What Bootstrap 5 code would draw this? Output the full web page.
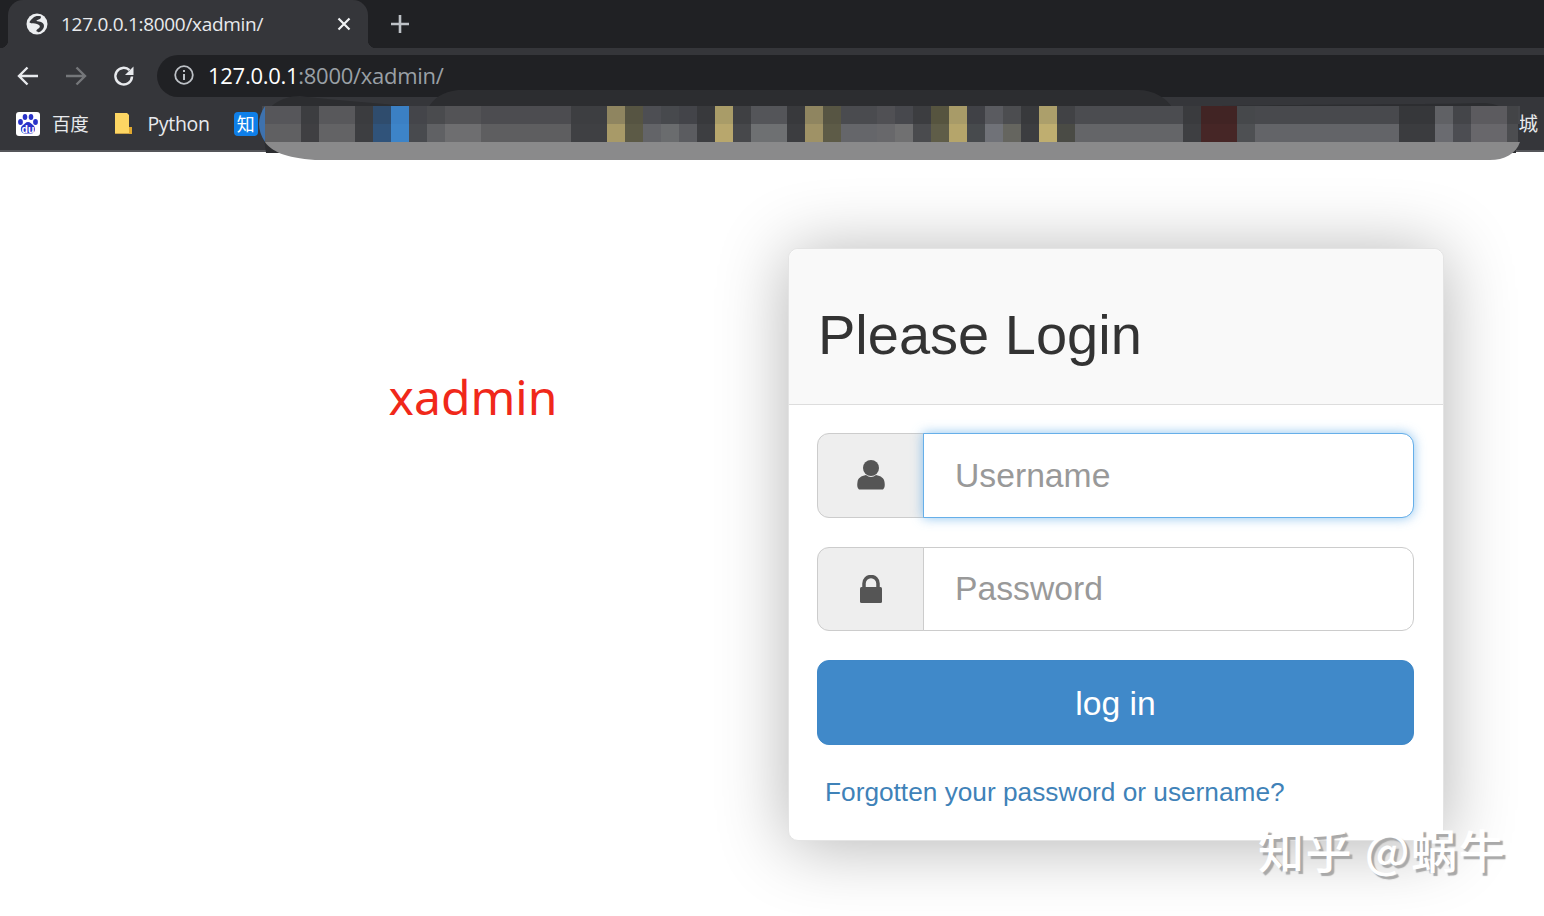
<!DOCTYPE html>
<html lang="en">
<head>
<meta charset="utf-8">
<title>127.0.0.1:8000/xadmin/</title>
<link href="https://cdn.jsdelivr.net/npm/bootstrap@5.3.0/dist/css/bootstrap.min.css" rel="stylesheet">
<style>
html,body{height:100%;overflow:hidden;background:#fff}
body{font-family:"Liberation Sans",Arial,sans-serif;color:#333;position:relative}
.chrome-ui{font-family:"Open Sans","Noto Sans CJK SC",sans-serif;color:#e8eaed}
.tabstrip{height:48px;background:#202124;padding-left:8px;gap:22px}
.tabshape{width:360px;height:48px;background:#35363a;border-radius:15px 15px 0 0;padding:0 17px 0 18px;position:relative;font-size:19px}
.tabshape::before,.tabshape::after{content:"";position:absolute;bottom:0;width:8px;height:8px}
.tabshape::before{left:-8px;background:radial-gradient(circle at 0 0,transparent 8px,#35363a 8.5px)}
.tabshape::after{right:-8px;background:radial-gradient(circle at 100% 0,transparent 8px,#35363a 8.5px)}
.tabtitle{margin-left:13px;letter-spacing:-.3px}
.toolbar{height:49px;background:#35363a;padding:7px 0 0 16px}
.navicons{gap:24px;width:141px;height:42px}
.omnibox{height:42px;background:#202124;border-radius:21px 0 0 21px;padding:0 0 2px 17px;font-size:22px}
.hosttext{color:#fff;margin-left:14px;letter-spacing:-.28px}
.pathtext{color:#9aa0a6;letter-spacing:-.28px}
.bookmarks{height:55px;background:#35363a;border-bottom:2px solid #55565a;padding:0 6px 0 16px;font-size:19.5px}
.markname{margin-left:12px;margin-right:25px;letter-spacing:-.3px}
.zhname{font-size:18.5px;margin-right:26px}
.pyname{margin-left:14px;margin-right:24px}
.zhmark{width:24px;height:24px;background:#0f7fe8;border-radius:4px;font-size:18px;color:#fff;line-height:24px;text-align:center}
.mosaic{position:absolute;left:0;top:0;pointer-events:none}
.stage{height:764px;padding-top:96px}
.brandcol{width:788px;padding:104px 0 0 158px;text-align:center}
.brandname{font-family:"Noto Sans",sans-serif;font-size:48px;line-height:90px;color:#f0281a}
.logincard{width:656px;height:593px;border-color:#e4e4e4;border-radius:10px;box-shadow:0 4px 70px rgba(0,0,0,.3)}
.logincard .card-header{height:156px;background:#f9f9f9;border-color:#ddd;padding:54px 29px 0;border-radius:10px 10px 0 0}
.logintitle{font-size:56px;line-height:64px;margin:0;font-weight:400;color:#333}
.logincard .card-body{padding:28px 29px 0 28px}
.fieldgroup{height:84.5px;margin-bottom:29px}
.fieldgroup .input-group-text{width:107px;justify-content:center;background:#eee;border-color:#ccc;border-radius:12px 0 0 12px;padding:0}
.fieldgroup .form-control{font-size:33.7px;padding:0 31px;border-color:#ccc;border-radius:0 12px 12px 0}
.fieldgroup .form-control::placeholder{color:#999;opacity:1}
.fieldgroup .activefield{border-color:#66afe9;box-shadow:0 0 12px rgba(102,175,233,.75);position:relative;z-index:3}
.loginbtn{height:85px;font-size:33.7px;background:#4089c9;border-color:#3f88c8;border-radius:12px;color:#fff;padding-top:8px}
.forgot{display:block;margin:30px 0 0 8px;font-size:26.25px;line-height:34px;color:#3f82b8;text-decoration:none}
.watermark{position:absolute;left:1258px;top:818px;font-family:"Noto Sans CJK SC",sans-serif;font-size:46px;font-weight:500;line-height:60px;color:#fff;letter-spacing:1.500px;text-shadow:3px 3px 1px #a9a9a9;white-space:nowrap}
</style>
</head>
<body>
<div class="chrome-ui">
  <div class="tabstrip d-flex align-items-center">
    <div class="tabshape d-flex align-items-center">
      <svg width="22" height="22" viewBox="0 0 22 22"><circle cx="11" cy="11" r="10.500" fill="#eceef0"/><path d="M15 3.500c-3-1-6-.5-8 1.500S3.500 8 3.500 9.500c2 1.500 5 .5 7.500 1.500s3.500 2 2.500 3.500-3.500 2-3 3.500 2.500 1.500 4 .5 3.500-3 3.500-5.500-2-4-5-4.500-3-.5-1.500-1.500 3.500-1 3.500-3z" fill="#35363a"/></svg>
      <span class="tabtitle">127.0.0.1:8000/xadmin/</span>
      <svg class="ms-auto" width="14" height="14" viewBox="0 0 14 14"><path d="M1.500 1.500l11 11m0-11l-11 11" stroke="#f1f3f4" stroke-width="2.200"/></svg>
    </div>
    <svg width="20" height="20" viewBox="0 0 20 20"><path d="M10 1v18M1 10h18" stroke="#bdc1c6" stroke-width="2.600"/></svg>
  </div>
  <div class="toolbar d-flex">
    <div class="navicons d-flex align-items-center">
      <svg width="24" height="22" viewBox="0 0 24 22"><path d="M22 11H3m8.500-8.500L3 11l8.500 8.500" fill="none" stroke="#e8eaed" stroke-width="2.400"/></svg>
      <svg width="24" height="22" viewBox="0 0 24 22"><path d="M2 11h19m-8.500-8.500L21 11l-8.500 8.500" fill="none" stroke="#75777a" stroke-width="2.400"/></svg>
      <svg width="24" height="24" viewBox="0 0 24 24"><path d="M20 12.500a8.300 8.300 0 1 1-2.500-6.300" fill="none" stroke="#e8eaed" stroke-width="2.500"/><path d="M21.500 2.500v8.500h-8.500z" fill="#e8eaed"/></svg>
    </div>
    <div class="omnibox flex-grow-1 d-flex align-items-center">
      <svg width="20" height="20" viewBox="0 0 20 20"><circle cx="10" cy="10" r="8.800" fill="none" stroke="#bdc1c6" stroke-width="1.800"/><path d="M9 9h2v6H9zM9 5h2v2H9z" fill="#bdc1c6"/></svg>
      <span class="hosttext">127.0.0.1</span><span class="pathtext">:8000/xadmin/</span>
    </div>
  </div>
  <div class="bookmarks d-flex align-items-center">
    <svg width="24" height="24" viewBox="0 0 24 24"><rect width="24" height="24" rx="3" fill="#fff"/><g fill="#2932c8"><ellipse cx="4.500" cy="10" rx="2.400" ry="3"/><ellipse cx="9" cy="5" rx="2.300" ry="3"/><ellipse cx="15" cy="5" rx="2.300" ry="3"/><ellipse cx="19.500" cy="10" rx="2.400" ry="3"/><path d="M12 10c2.500 0 3.500 2 5.500 3.500s2.500 8-2.500 8H9c-5 0-5-6.500-2.500-8S9.500 10 12 10z"/></g><text x="12" y="20.500" text-anchor="middle" font-size="10.500" font-family="Liberation Sans" font-weight="700" fill="#fff">du</text></svg>
    <span class="markname zhname">百度</span>
    <svg width="19" height="22" viewBox="0 0 19 22"><path d="M1 0h12l2 2v18H1z" fill="#fdd663"/><path d="M15 14h3v7h-3z" fill="#e0a82e"/><path d="M1 20h14v1H1z" fill="#c9a24a"/></svg>
    <span class="markname pyname">Python</span>
    <span class="zhmark">知</span>
    <span class="ms-auto">城</span>
  </div>
</div>

<div class="stage d-flex">
  <div class="brandcol"><span class="brandname">xadmin</span></div>
  <div class="card logincard">
    <div class="card-header"><h1 class="logintitle">Please Login</h1></div>
    <div class="card-body">
      <div class="input-group fieldgroup">
        <span class="input-group-text"><svg width="28" height="30" viewBox="0 0 28 30"><circle cx="14" cy="8" r="8" fill="#555"/><path d="M9 15c3 2.500 7 2.500 10 0 5 1 8 3 8.500 7 .5 3 .5 6-1.500 7.500H2c-2-1.500-2-4.500-1.500-7.500C1 18 4 16 9 15z" fill="#555"/></svg></span>
        <input class="form-control activefield" type="text" placeholder="Username">
      </div>
      <div class="input-group fieldgroup">
        <span class="input-group-text"><svg width="24" height="28" viewBox="0 0 24 28"><path d="M5 13V8.500a7 7 0 0 1 14 0V13" fill="none" stroke="#555" stroke-width="3.500"/><rect x="1" y="12" width="22" height="16" rx="1.500" fill="#555"/></svg></span>
        <input class="form-control" type="password" placeholder="Password">
      </div>
      <button class="btn btn-primary w-100 loginbtn" type="button">log in</button>
      <a class="forgot" href="#">Forgotten your password or username?</a>
    </div>
  </div>
</div>

<svg class="mosaic" width="1544" height="170" viewBox="0 0 1544 170">
  <path d="M262 124C264 108 280 96 300 96c30 4 90 8 128 12 6-10 14-16 30-18h680c16 0 28 8 34 17 100-3 230-2 310-4 20 0 34 10 34 30v20H266z" fill="#2c2d30"/>
  <g id="mosaic-top"><rect x="262" y="106" width="1258" height="18" fill="#46474b"/></g>
  <path d="M265 142c6 9 20 16 50 18h1175c14 0 26-6 30-18z" fill="#8a8a8b"/>
  <path d="M259 124c0-6 2-12 6-18v36c-4-6-6-12-6-18z" fill="#3e72ae"/>
</svg>
<div class="watermark">知乎 @蜗牛</div>

<script>
// mosaic cells: [x, width, top colour, bottom colour]
var cells=[[265,36,"#56565a","#606062"],[301,18,"#3c3d40","#3f3f42"],[319,36,"#58585b","#636365"],[355,18,"#3b3c3f","#3d3e41"],[373,18,"#2f4c6d","#30537a"],[391,18,"#3b80c4","#3d84c8"],[409,18,"#44454a","#484a4e"],[427,18,"#4a4b4e","#606164"],[445,36,"#535356","#6e6e70"],[481,90,"#4c4c50","#5e5e60"],[571,36,"#3d3e41","#3f4043"],[607,18,"#8f8560","#a89a68"],[625,18,"#565442","#5c5a46"],[643,18,"#4d4e53","#636468"],[661,18,"#47494d","#6a6c6e"],[679,18,"#434449","#5b5c60"],[697,18,"#38393c","#3d3e41"],[715,18,"#a99c68","#b8a76d"],[733,18,"#3f4043","#47484b"],[751,36,"#545559","#6e7072"],[787,18,"#38393c","#3c3d40"],[805,18,"#8f8560","#9f9266"],[823,18,"#575543","#5d5b47"],[841,36,"#4a4b4f","#65666a"],[877,18,"#505054","#68686b"],[895,18,"#47484d","#707071"],[913,18,"#3c3d40","#4a4b4e"],[931,18,"#56543f","#5f5d48"],[949,18,"#a89b68","#b5a56b"],[967,18,"#404146","#474a4d"],[985,18,"#5a5b60","#707278"],[1003,18,"#4c4d50","#65655f"],[1021,18,"#38393c","#3c3d40"],[1039,18,"#ac9f6b","#bfae70"],[1057,18,"#414245","#4a4b45"],[1075,108,"#4b4c50","#646568"],[1183,18,"#3a3b3e","#3e3f42"],[1201,36,"#412424","#462626"],[1237,18,"#46484b","#4e5053"],[1255,144,"#48494d","#636468"],[1399,36,"#36373a","#3b3c3f"],[1435,18,"#606165","#6a6b70"],[1453,18,"#444549","#4c4d52"],[1471,36,"#5c5b5f","#68676b"],[1507,11,"#434447","#4c4d50"]];
var g=document.getElementById("mosaic-top"),ns="http://www.w3.org/2000/svg";
cells.forEach(function(c){[[106,c[2]],[124,c[3]]].forEach(function(r){var e=document.createElementNS(ns,"rect");e.setAttribute("x",c[0]);e.setAttribute("y",r[0]);e.setAttribute("width",c[1]);e.setAttribute("height",18);e.setAttribute("fill",r[1]);g.appendChild(e);});});
</script>
<script src="https://cdn.jsdelivr.net/npm/bootstrap@5.3.0/dist/js/bootstrap.bundle.min.js"></script>
</body>
</html>
